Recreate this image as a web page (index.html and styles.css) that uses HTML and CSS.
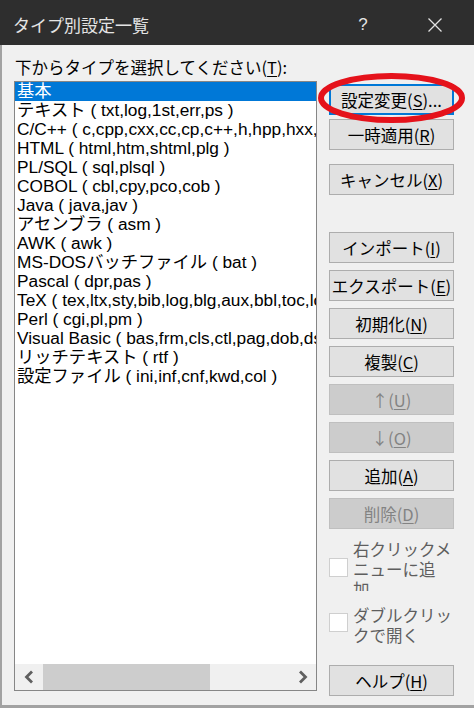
FILE: index.html
```html
<!DOCTYPE html>
<html lang="ja">
<head>
<meta charset="utf-8">
<title>タイプ別設定一覧</title>
<link rel="stylesheet" href="styles.css">
</head>
<body>
<div class="window">
  <div class="titlebar">
    <span class="title">タイプ別設定一覧</span>
    <span class="cap-help">?</span>
    <span class="cap-close"><svg width="14" height="14" viewBox="0 0 14 14"><path d="M0.5 0.5 L13.5 13.5 M13.5 0.5 L0.5 13.5" stroke="#e2e2e2" stroke-width="1.3" fill="none"/></svg></span>
  </div>
  <div class="content">
    <div class="left">
      <div class="label">下からタイプを選択してください(<span class="key">T</span>):</div>
      <div class="listbox">
        <ul class="items">
          <li class="item selected">基本</li>
          <li class="item">テキスト ( txt,log,1st,err,ps )</li>
          <li class="item">C/C++ ( c,cpp,cxx,cc,cp,c++,h,hpp,hxx,hh,hp,h++,rc,dsw,dsp,def,hm,inl )</li>
          <li class="item">HTML ( html,htm,shtml,plg )</li>
          <li class="item">PL/SQL ( sql,plsql )</li>
          <li class="item">COBOL ( cbl,cpy,pco,cob )</li>
          <li class="item">Java ( java,jav )</li>
          <li class="item">アセンブラ ( asm )</li>
          <li class="item">AWK ( awk )</li>
          <li class="item">MS-DOSバッチファイル ( bat )</li>
          <li class="item">Pascal ( dpr,pas )</li>
          <li class="item">TeX ( tex,ltx,sty,bib,log,blg,aux,bbl,toc,lof,lot,idx,ind,glo )</li>
          <li class="item">Perl ( cgi,pl,pm )</li>
          <li class="item">Visual Basic ( bas,frm,cls,ctl,pag,dob,dsr,vb )</li>
          <li class="item">リッチテキスト ( rtf )</li>
          <li class="item">設定ファイル ( ini,inf,cnf,kwd,col )</li>
        </ul>
        <div class="hscroll">
          <div class="sb-btn"><svg width="12" height="14" viewBox="0 0 12 14"><polyline points="9,1.5 3.5,7 9,12.5" fill="none" stroke="#5f5f5f" stroke-width="2.8"/></svg></div>
          <div class="sb-track"><div class="sb-thumb"></div></div>
          <div class="sb-btn"><svg width="12" height="14" viewBox="0 0 12 14"><polyline points="3,1.5 8.5,7 3,12.5" fill="none" stroke="#5f5f5f" stroke-width="2.8"/></svg></div>
        </div>
      </div>
    </div>
    <div class="right">
      <div class="btn-wrap first">
        <div class="btn default">設定変更(<span class="key">S</span>)...</div>
        <svg class="mark" width="147" height="50" viewBox="0 0 147 50"><ellipse cx="73.5" cy="25" rx="70.5" ry="22" fill="none" stroke="#e5121b" stroke-width="6"/></svg>
      </div>
      <div class="btn g1">一時適用(<span class="key">R</span>)</div>
      <div class="btn g2">キャンセル(<span class="key">X</span>)</div>
      <div class="btn g3">インポート(<span class="key">I</span>)</div>
      <div class="btn gn">エクスポート(<span class="key">E</span>)</div>
      <div class="btn gn">初期化(<span class="key">N</span>)</div>
      <div class="btn gn">複製(<span class="key">C</span>)</div>
      <div class="btn gn disabled">↑(<span class="key">U</span>)</div>
      <div class="btn gn disabled">↓(<span class="key">O</span>)</div>
      <div class="btn gn">追加(<span class="key">A</span>)</div>
      <div class="btn gn disabled">削除(<span class="key">D</span>)</div>
      <div class="check c1">
        <span class="box"></span>
        <span class="check-label">右クリックメ<br>ニューに追<br>加</span>
      </div>
      <div class="check c2">
        <span class="box"></span>
        <span class="check-label">ダブルクリッ<br>クで開く</span>
      </div>
      <div class="btn help">ヘルプ(<span class="key">H</span>)</div>
    </div>
  </div>
</div>
</body>
</html>
```
FILE: styles.css
```css
html, body {
  margin: 0;
  padding: 0;
}
body {
  width: 474px;
  height: 708px;
  overflow: hidden;
  background: #f0f0f0;
  font-family: "Noto Sans CJK JP", "Liberation Sans", sans-serif;
  color: #000;
}
.window {
  width: 474px;
  height: 708px;
  display: flex;
  flex-direction: column;
}
.titlebar {
  height: 45px;
  box-sizing: border-box;
  padding-top: 4px;
  background: #2e2e2e;
  display: flex;
  align-items: center;
  color: #e4e4e4;
}
.title {
  flex: 1;
  padding-left: 13px;
  font-size: 17px;
  line-height: 24px;
}
.cap-help {
  width: 20px;
  text-align: center;
  font-family: "Liberation Sans", sans-serif;
  font-size: 17px;
  line-height: 24px;
  margin-right: 55px;
}
.cap-close {
  width: 14px;
  height: 14px;
  margin-right: 32px;
  display: flex;
}
.content {
  flex: 1;
  display: flex;
  box-sizing: border-box;
  padding: 11px 0 0 14px;
  box-shadow: inset 2px 0 #a2a2a2, inset 0 -3px #a2a2a2;
}
.left {
  width: 303px;
  display: flex;
  flex-direction: column;
}
.label {
  font-size: 16.5px;
  line-height: 22px;
  height: 22px;
  white-space: nowrap;
  padding-left: 1px;
}
.key {
  text-decoration: underline;
  text-underline-offset: 2px;
}
.listbox {
  margin-top: 3px;
  height: 610px;
  box-sizing: border-box;
  border: 1px solid #868686;
  background: #fff;
  display: flex;
  flex-direction: column;
}
.items {
  list-style: none;
  margin: 0;
  padding: 0;
  height: 582px;
  overflow: hidden;
  font-family: "Liberation Sans", "Noto Sans CJK JP", sans-serif;
  font-size: 17.3px;
  line-height: 19px;
}
.item {
  height: 19px;
  padding-left: 2px;
  white-space: nowrap;
}
.item.selected {
  background: #0078d7;
  color: #fff;
}
.hscroll {
  height: 26px;
  display: flex;
  background: #f0f0f0;
}
.sb-btn {
  width: 27px;
  display: flex;
  align-items: center;
  justify-content: center;
}
.sb-track {
  flex: 1;
  display: flex;
}
.sb-thumb {
  width: 167px;
  margin-left: 1px;
  background: #cdcdcd;
}
.right {
  width: 125px;
  margin-left: 12px;
  padding-top: 28px;
  display: flex;
  flex-direction: column;
}
.btn-wrap {
  position: relative;
}
.mark {
  position: absolute;
  left: -11px;
  top: -11px;
  pointer-events: none;
}
.btn {
  height: 31px;
  box-sizing: border-box;
  border: 1px solid #adadad;
  background: #e1e1e1;
  display: flex;
  align-items: center;
  justify-content: center;
  font-size: 16.5px;
  line-height: 20px;
  white-space: nowrap;
}
.btn.default {
  border: 2px solid #0078d7;
}
.btn.g1 { margin-top: 4px; }
.btn.g2 { margin-top: 14px; }
.btn.g3 { margin-top: 37px; }
.btn.gn { margin-top: 7px; }
.btn.disabled {
  background: #cccccc;
  border-color: #bfbfbf;
  color: #838383;
}
.check {
  display: flex;
  align-items: flex-start;
  gap: 5px;
  color: #5e5e5e;
}
.check.c1 {
  margin-top: 10px;
  height: 52px;
}
.check.c2 {
  margin-top: 14px;
  height: 40px;
}
.box {
  width: 19px;
  height: 19px;
  box-sizing: border-box;
  border: 1px solid #cfcfcf;
  background: #fff;
  flex: none;
}
.c1 .box { margin-top: 19px; }
.c2 .box { margin-top: 8px; }
.check-label {
  font-size: 16.5px;
  line-height: 20px;
  height: 100%;
  overflow: hidden;
  white-space: nowrap;
}
.btn.help {
  margin-top: 20px;
}
```
